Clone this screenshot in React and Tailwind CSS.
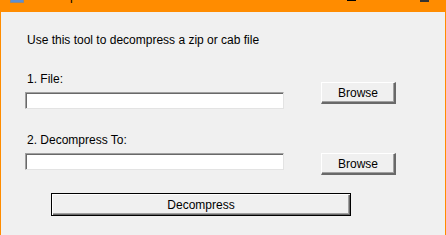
import React from "react";

function TextBox() {
  return (
    <div className="h-[17px] w-[259px] bg-white border-t border-l border-t-[#a0a0a0] border-l-[#a0a0a0] border-b border-r border-b-[#e3e3e3] border-r-[#e3e3e3] shadow-[inset_1px_1px_0_#696969]"></div>
  );
}

function BrowseButton({ className }) {
  return (
    <button
      className={`h-[22px] w-[75px] bg-[#f0f0f0] border-t border-l border-t-white border-l-white border-b-2 border-r-2 border-b-[#696969] border-r-[#696969] shadow-[inset_-1px_-1px_0_#a0a0a0] text-[12px] leading-none text-black ${className}`}
    >
      Browse
    </button>
  );
}

export default function App() {
  return (
    <div className="w-[446px] h-[235px] overflow-hidden bg-[#f0f0f0] border-x border-[#ff8c00] font-['Liberation_Sans',Arial,sans-serif] text-[12px] leading-[14px] text-black">
      {/* barre de titre, coupée en haut */}
      <div className="h-[12px] bg-[#ff8c00] flex items-end overflow-hidden">
        <div className="ml-[9px] mb-[9px] h-[14px] w-[14px] bg-[#5b8fd6] border border-[#8a8a8a]"></div>
        <span className="ml-[8px] mb-[9px] text-[12px] leading-[14px] whitespace-nowrap">
          Decompression Tool - Pictura
        </span>
        <div className="ml-auto mb-[11px] mr-[64px] h-px w-[9px] bg-black"></div>
        <div className="mb-[10px] mr-[16px] h-[2px] w-[9px] bg-[#333]"></div>
      </div>

      <div className="pl-[24px]">
        <p className="mt-[21px] ml-[2px]">Use this tool to decompress a zip or cab file</p>

        <div className="mt-[25px] flex items-start">
          <div className="flex flex-col">
            <span className="ml-[2px]">1. File:</span>
            <div className="mt-[6px]">
              <TextBox />
            </div>
          </div>
          <BrowseButton className="mt-[10px] ml-[37px]" />
        </div>

        <div className="mt-[24px] flex items-start">
          <div className="flex flex-col">
            <span className="ml-[2px]">2. Decompress To:</span>
            <div className="mt-[6px]">
              <TextBox />
            </div>
          </div>
          <BrowseButton className="mt-[20px] ml-[37px]" />
        </div>

        <button className="mt-[18px] ml-[26px] h-[23px] w-[300px] bg-[#f0f0f0] border border-black shadow-[inset_1px_1px_0_#fff,inset_-1px_-1px_0_#696969,inset_-2px_-2px_0_#a0a0a0] text-[12px] leading-none text-black">
          Decompress
        </button>
      </div>
    </div>
  );
}
